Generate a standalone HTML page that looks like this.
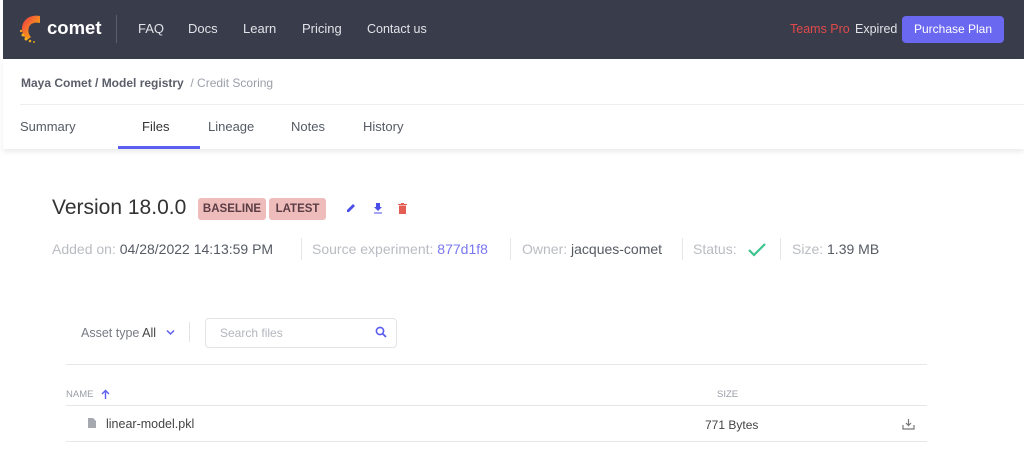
<!DOCTYPE html>
<html><head><meta charset="utf-8"><style>
*{margin:0;padding:0;box-sizing:border-box}
body{width:1024px;height:474px;background:#fff;font-family:"Liberation Sans",sans-serif;position:relative;overflow:hidden}
.a{position:absolute;white-space:nowrap}
.hdr{position:absolute;left:3px;top:0;width:1021px;height:59px;background:#383c4b}
.nav{color:#e2e3e8;font-size:13px;top:21px}
.sub{position:absolute;left:3px;top:59px;width:1021px;height:90px;background:#fff;box-shadow:0 3px 5px rgba(0,0,0,0.08)}
.tab{font-size:13px;color:#555a64;top:119px}
.tag{position:absolute;top:198px;height:22px;background:#efbcbc;border-radius:3px;color:#5a3d44;font-size:11.5px;font-weight:bold;line-height:22px;text-align:center}
.lbl{color:#b9bcc2;font-size:14px;top:241px}
.val{color:#555a63}
.sep{position:absolute;top:238px;width:1px;height:22px;background:#e6e7ea}
</style></head><body>
<div class="hdr"></div>
<svg class="a" style="left:18px;top:13px" width="26" height="32" viewBox="0 0 26 32">
<defs><linearGradient id="g" x1="0" y1="0" x2="1" y2="1"><stop offset="0" stop-color="#f0324a"/><stop offset="0.6" stop-color="#f7901e"/><stop offset="1" stop-color="#f5c518"/></linearGradient></defs>
<path d="M22 3 C12 1 4 7 4 16 C4 20 6 24 9 27 L13 24 C10 21 10 17 11 14 C13 10 17 9 22 10 Z" fill="url(#g)"/>
<circle cx="5" cy="22" r="1.5" fill="#f5b51e"/><circle cx="8" cy="26" r="1.5" fill="#f5b51e"/><circle cx="12" cy="28" r="1.3" fill="#e8a81a"/><circle cx="3" cy="18" r="1.2" fill="#f5a01e"/><circle cx="16" cy="29" r="1" fill="#d99a1a"/>
</svg>
<div class="a" style="left:47px;top:17px;color:#fff;font-size:18.5px;font-weight:bold">comet</div>
<div class="a" style="left:116px;top:15px;width:1px;height:28px;background:#5a5f6e"></div>
<div class="a nav" style="left:138px">FAQ</div>
<div class="a nav" style="left:188px">Docs</div>
<div class="a nav" style="left:243px">Learn</div>
<div class="a nav" style="left:302px">Pricing</div>
<div class="a nav" style="left:367px;font-size:12.5px;top:22px">Contact us</div>
<div class="a" style="left:790px;top:22px;font-size:12.5px;color:#e04a4a">Teams Pro</div>
<div class="a" style="left:855px;top:22px;font-size:12.5px;color:#e2e3e8">Expired</div>
<div class="a" style="left:902px;top:16px;width:102px;height:27px;background:#6a68f0;border-radius:4px;color:#fff;font-size:12px;line-height:27px;text-align:center">Purchase Plan</div>
<div class="sub"></div>
<div class="a" style="left:21px;top:76px;font-size:12px;color:#5a5e69;font-weight:bold">Maya Comet / Model registry <span style="color:#9a9ea8;font-weight:normal">&nbsp;/ Credit Scoring</span></div>
<div class="a" style="left:20px;top:104px;width:1004px;height:1px;background:#eceef1"></div>
<div class="a tab" style="left:20px">Summary</div>
<div class="a tab" style="left:142px;color:#333">Files</div>
<div class="a tab" style="left:208px">Lineage</div>
<div class="a tab" style="left:291px">Notes</div>
<div class="a tab" style="left:363px">History</div>
<div class="a" style="left:118px;top:146px;width:82px;height:3px;background:#5b5ef0"></div>
<div class="a" style="left:52px;top:196px;font-size:21px;color:#333">Version 18.0.0</div>
<div class="tag" style="left:198px;width:68px">BASELINE</div>
<div class="tag" style="left:269px;width:57px">LATEST</div>
<svg class="a" style="left:346px;top:203px" width="10" height="10" viewBox="0 0 10 10"><path d="M1 9 L1 7 L7 1 L9 3 L3 9 Z" fill="#4a4ee8"/></svg>
<svg class="a" style="left:373px;top:202px" width="10" height="12" viewBox="0 0 10 12"><path d="M3 1 H7 V5 H9 L5 9 L1 5 H3 Z M1 10.5 H9 V11.5 H1 Z" fill="#4a4ee8"/></svg>
<svg class="a" style="left:398px;top:203px" width="9" height="11" viewBox="0 0 9 11"><path d="M0 1 H9 V2 H0 Z M3 0 H6 V1 H3 Z M1 2.5 H8 V11 H1 Z" fill="#e35d54"/></svg>
<div class="a lbl" style="left:52px">Added on: <span class="val">04/28/2022 14:13:59 PM</span></div>
<div class="sep" style="left:301px"></div>
<div class="a lbl" style="left:312px">Source experiment: <span style="color:#7a78f0">877d1f8</span></div>
<div class="sep" style="left:510px"></div>
<div class="a lbl" style="left:522px">Owner: <span class="val">jacques-comet</span></div>
<div class="sep" style="left:682px"></div>
<div class="a lbl" style="left:693px">Status:</div>
<svg class="a" style="left:747px;top:242px" width="20" height="16" viewBox="0 0 20 16"><path d="M2 8 L7 13 L18 2" stroke="#3cc48e" stroke-width="2.2" fill="none"/></svg>
<div class="sep" style="left:780px"></div>
<div class="a lbl" style="left:792px">Size: <span class="val">1.39 MB</span></div>
<div class="a" style="left:81px;top:326px;font-size:12.5px;color:#777b84">Asset type <span style="color:#444;">All</span></div>
<svg class="a" style="left:166px;top:329px" width="9" height="7" viewBox="0 0 9 7"><path d="M1 1.5 L4.5 5 L8 1.5" stroke="#5b5ef0" stroke-width="1.5" fill="none"/></svg>
<div class="a" style="left:189px;top:322px;width:1px;height:20px;background:#e3e4e7"></div>
<div class="a" style="left:205px;top:318px;width:192px;height:30px;border:1px solid #e3e4e8;border-radius:4px"></div>
<div class="a" style="left:220px;top:326px;font-size:12px;color:#b3b6bd">Search files</div>
<svg class="a" style="left:375px;top:326px" width="12" height="12" viewBox="0 0 12 12"><circle cx="5" cy="5" r="3.6" stroke="#5b5ef0" stroke-width="1.6" fill="none"/><path d="M7.6 7.6 L11 11" stroke="#5b5ef0" stroke-width="1.8"/></svg>
<div class="a" style="left:66px;top:364px;width:861px;height:1px;background:#e6e7ea"></div>
<div class="a" style="left:66px;top:389px;font-size:9.5px;color:#9a9ea6">NAME</div>
<svg class="a" style="left:101px;top:389px" width="9" height="10" viewBox="0 0 9 10"><path d="M4.5 10 V2 M1 5 L4.5 1.5 L8 5" stroke="#5b5ef0" stroke-width="1.4" fill="none"/></svg>
<div class="a" style="left:717px;top:389px;font-size:9.5px;color:#9a9ea6">SIZE</div>
<div class="a" style="left:66px;top:405px;width:861px;height:1px;background:#e6e7ea"></div>
<svg class="a" style="left:88px;top:418px" width="8" height="10" viewBox="0 0 8 10"><path d="M0 0 H5 L8 3 V10 H0 Z" fill="#a5a8ae"/></svg>
<div class="a" style="left:106px;top:417px;font-size:12.5px;color:#444">linear-model.pkl</div>
<div class="a" style="left:705px;top:418px;font-size:12px;color:#444">771 Bytes</div>
<svg class="a" style="left:902px;top:418px" width="13" height="12" viewBox="0 0 13 12"><path d="M6.5 1 V7 M4 5 L6.5 7.5 L9 5 M1 7 V11 H12 V7" stroke="#777" stroke-width="1.2" fill="none"/></svg>
<div class="a" style="left:66px;top:441px;width:861px;height:1px;background:#e6e7ea"></div>
</body></html>
